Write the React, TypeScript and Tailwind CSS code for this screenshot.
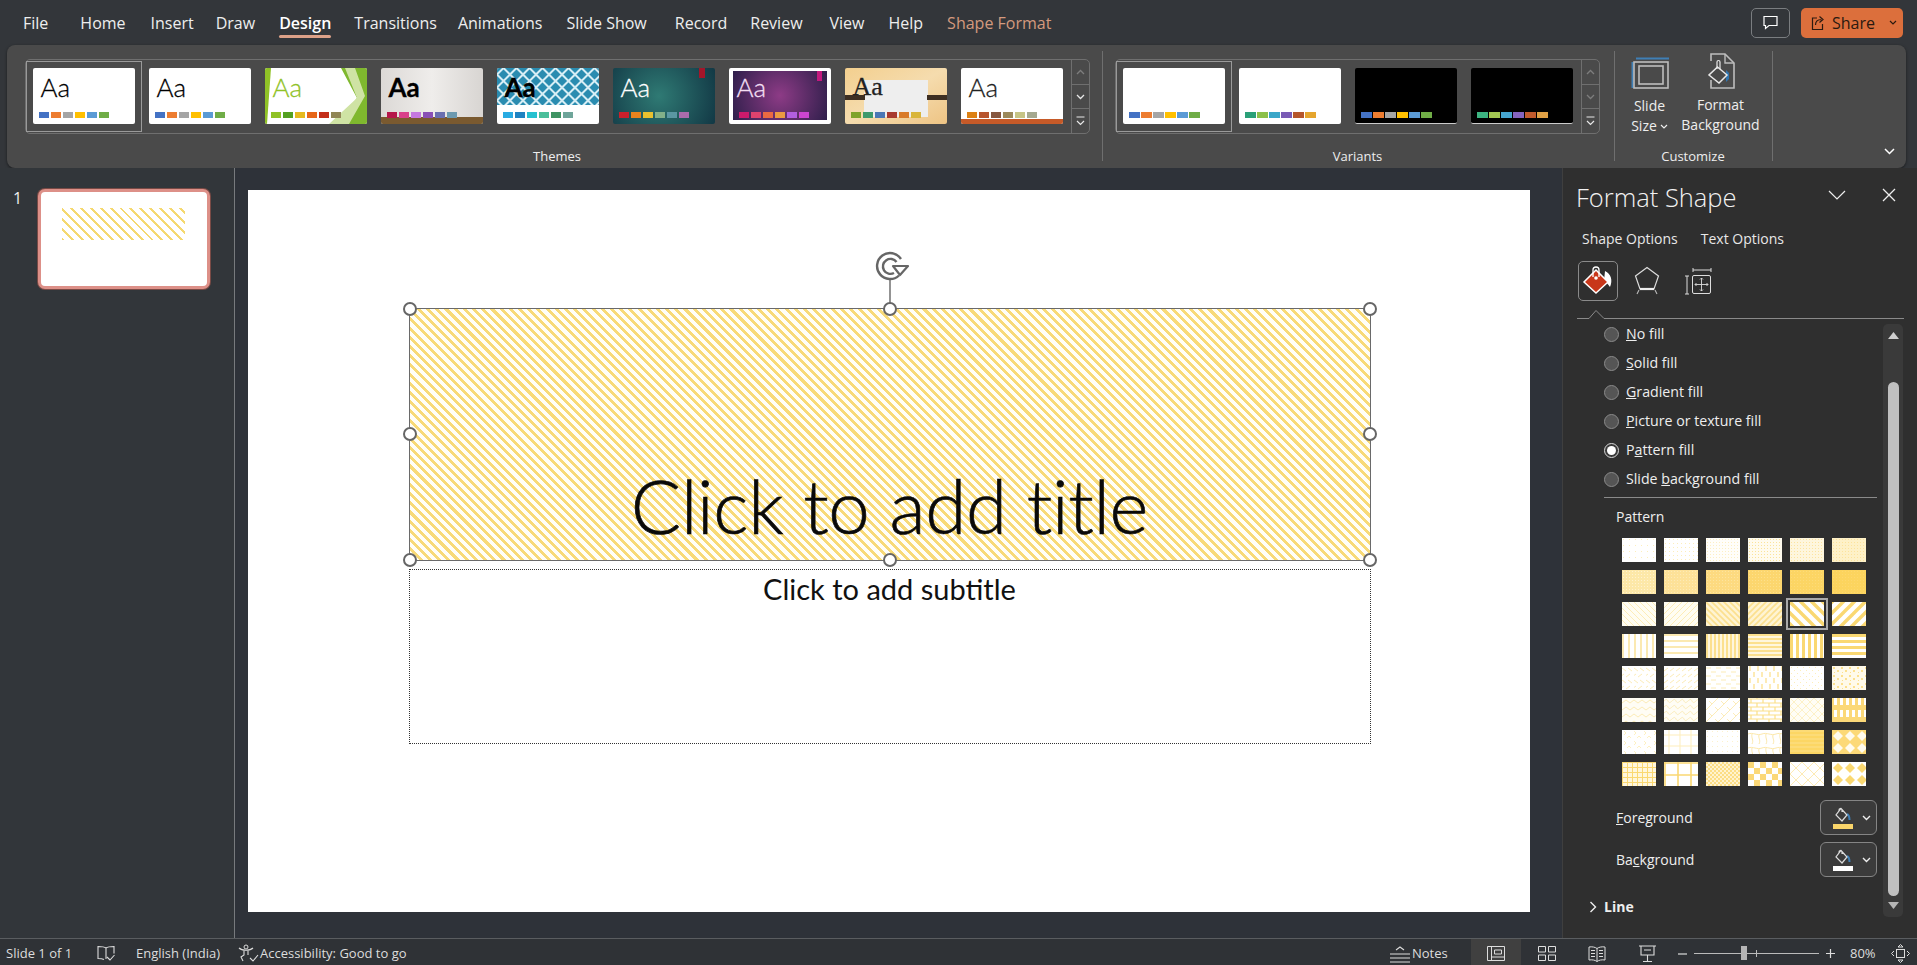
import React from "react";

const tabs: [string, string][] = [
  ["Home", ""],
  ["Insert", "ml-[2px]"],
  ["Draw", "-ml-[1px]"],
  ["Design", "relative ml-[1px] font-semibold text-white"],
  ["Transitions", ""],
  ["Animations", "-ml-[2px]"],
  ["Slide Show", "ml-[1px]"],
  ["Record", "ml-[5px]"],
  ["Review", ""],
  ["View", "ml-[4px]"],
  ["Help", "ml-[1px]"],
];

const office = ["bg-[#4472c4]","bg-[#ed7d31]","bg-[#a5a5a5]","bg-[#ffc000]","bg-[#5b9bd5]","bg-[#70ad47]"];

function Swatches({ colors }: { colors: string[] }) {
  return (
    <div className="relative flex gap-[1.5px] ml-[6px]">
      {colors.map((c, i) => (
        <div key={i} className={`w-[10.5px] h-[6px] ${c}`} />
      ))}
    </div>
  );
}

function Thumb({ cls, aa, colors, children, noAa }: { cls: string; aa?: string; colors: string[]; children?: React.ReactNode; noAa?: boolean }) {
  return (
    <div className={`relative w-[102px] h-[56px] rounded-[2px] overflow-hidden shrink-0 ${cls}`}>
      {children}
      <div className={`relative h-[44px] pl-[8px] pt-[4px] text-[26px] leading-[30px] font-['Lato',sans-serif] font-light [-webkit-text-stroke:0.3px_currentColor] ${aa ?? "text-black"}`}>{noAa ? "" : "Aa"}</div>
      <Swatches colors={colors} />
    </div>
  );
}

function ScrollCol({ dimDown }: { dimDown?: boolean }) {
  return (
    <div className="w-[18px] h-full ml-auto flex flex-col border-l border-[#6f6f6f]">
      <div className="flex-1 flex items-center justify-center border-b border-[#6f6f6f]">
        <svg width="9" height="6" viewBox="0 0 9 6"><path d="M1 5l3.500-3.500L8 5" fill="none" stroke="#7d7d7d" strokeWidth="1.3" /></svg>
      </div>
      <div className="flex-1 flex items-center justify-center border-b border-[#6f6f6f]">
        <svg width="9" height="6" viewBox="0 0 9 6"><path d="M1 1l3.500 3.500L8 1" fill="none" stroke={dimDown ? "#7d7d7d" : "#e8e8e8"} strokeWidth="1.3" /></svg>
      </div>
      <div className="flex-1 flex items-center justify-center">
        <svg width="9" height="11" viewBox="0 0 9 11"><path d="M0.500 1h8M1 5l3.500 3.500L8 5" fill="none" stroke="#e8e8e8" strokeWidth="1.2" /></svg>
      </div>
    </div>
  );
}

function Sep() {
  return <div className="w-px h-[110px] mt-[6px] bg-[#6f6f6f] shrink-0" />;
}

const dn = (n: number) => `M-1 -1L${n + 1} ${n + 1}M-1 ${n - 1}L1 ${n + 1}M${n - 1} -1L${n + 1} 1`;
const up = (n: number) => `M-1 ${n + 1}L${n + 1} -1M-1 1L1 -1M${n - 1} ${n + 1}L${n + 1} ${n - 1}`;
const Y = "#fad872";
const P1 = "#fcecb8";

type Pat = { w: number; h: number; d: string; sw?: number; f?: boolean; c?: string; bg?: string };
const patterns: Pat[] = [
  { w: 6, h: 6, d: "M1 1h1v1h-1z", f: true, c: "#fdeebb", bg: "#ffffff" },
  { w: 4, h: 4, d: "M1 1h1v1h-1z", f: true, c: "#fdeebb", bg: "#ffffff" },
  { w: 3, h: 3, d: "M1 1h1v1h-1z", f: true, c: "#fdefc4", bg: "#fffefa" },
  { w: 3, h: 3, d: "M1 1h1v1h-1z", f: true, c: "#fbe39a", bg: "#fffbee" },
  { w: 3, h: 3, d: "M1 1h1v1h-1z", f: true, c: "#fde49f", bg: "#fef6dd" },
  { w: 3, h: 3, d: "M1 1h1v1h-1z", f: true, c: "#fde39c", bg: "#fef1c8" },
  { w: 3, h: 3, d: "M1 1h1v1h-1z", f: true, c: "#fff3d0", bg: "#fde8a8" },
  { w: 3, h: 3, d: "M1 1h1v1h-1z", f: true, c: "#fdeab5", bg: "#fde198" },
  { w: 3, h: 3, d: "M1 1h1v1h-1z", f: true, c: "#fde49e", bg: "#fdda80" },
  { w: 3, h: 3, d: "M1 1h1v1h-1z", f: true, c: "#fde08a", bg: "#fcd66e" },
  { w: 3, h: 3, d: "M1 1h1v1h-1z", f: true, c: "#fddb78", bg: "#fcd564" },
  { w: 3, h: 3, d: "M1 1h1v1h-1z", f: true, c: "#fdd86e", bg: "#fcd45e" },
  { w: 6, h: 6, d: dn(6), sw: 0.9, c: "#fdeab0", bg: "#fffdf2" },
  { w: 6, h: 6, d: up(6), sw: 0.9, c: "#fdeab0", bg: "#fffdf2" },
  { w: 6, h: 6, d: dn(6), sw: 1.6, c: "#fce08e", bg: "#fff4d2" },
  { w: 6, h: 6, d: up(6), sw: 1.6, c: "#fce08e", bg: "#fff4d2" },
  { w: 11, h: 11, d: dn(11), sw: 3.4, c: Y },
  { w: 11, h: 11, d: up(11), sw: 3.4, c: Y },
  { w: 6, h: 6, d: "M1 0V6", sw: 1.6, c: "#fbe49e" },
  { w: 6, h: 6, d: "M0 1H6", sw: 1.6, c: "#fbe49e" },
  { w: 4, h: 4, d: "M1 0V4", sw: 2, c: "#fce08e", bg: "#fff6dd" },
  { w: 4, h: 4, d: "M0 1H4", sw: 2, c: "#fce08e", bg: "#fff6dd" },
  { w: 6, h: 6, d: "M1.500 0V6", sw: 3, c: Y },
  { w: 6, h: 6, d: "M0 1.500H6", sw: 3, c: Y },
  { w: 12, h: 12, d: "M0 2L4 5M6 2L10 5M2 8L-2 11M8 8L4 11", sw: 1, c: P1 },
  { w: 12, h: 12, d: "M0 5L4 2M6 5L10 2M0 11L4 8M6 11L10 8", sw: 1, c: P1 },
  { w: 10, h: 8, d: "M0 2H5M5 6H10", sw: 1.2, c: P1 },
  { w: 8, h: 12, d: "M2 0V5M6 6V11", sw: 2, c: "#fdebb5" },
  { w: 6, h: 6, d: "M1 1h1v1h-1zM4 4h1v1h-1z", f: true, c: "#fdeebb" },
  { w: 8, h: 8, d: "M1 1h2v2h-2zM5 4h2v2h-2zM2 6h1v1h-1z", f: true, c: "#fce08e", bg: "#fffaea" },
  { w: 8, h: 7, d: "M0 5L4 2L8 5", sw: 1, c: P1, bg: "#fffdf5" },
  { w: 8, h: 6, d: "M0 3C2 1 3 1 4 3S6 5 8 3", sw: 1, c: P1, bg: "#fffdf5" },
  { w: 12, h: 12, d: up(12) + "M3 3L6 6M9 9L12 12", sw: 1, c: P1 },
  { w: 12, h: 8, d: "M0 1H12M0 5H12M3 1V5M9 5V9M9 -3V1", sw: 1.2, c: "#fbe08a" },
  { w: 8, h: 8, d: dn(8) + up(8), sw: 0.8, c: "#fdeebb", bg: "#fffdf5" },
  { w: 12, h: 12, d: "M2 0h3v7h-3zM8 0h3v7h-3z", f: true, c: "#ffffff", bg: "#fbd878" },
  { w: 10, h: 10, d: "M2 1L4 3M4 3L2 5M7 6L9 8M7 6L5 8", sw: 0.9, c: "#fdeebb" },
  { w: 11, h: 11, d: "M0 5H11M5 0V11", sw: 1, c: "#fdeebb" },
  { w: 5, h: 5, d: "M1 1h1v1h-1z", f: true, c: "#fdf1cc" },
  { w: 14, h: 14, d: "M0 4C5 2 9 6 14 4M4 4C3 8 6 10 4 14M11 5C10 8 13 10 11 14", sw: 1, c: "#fce8ab" },
  { w: 4, h: 4, d: "M0 1H4", sw: 1, c: "#fde08a", bg: "#fcd664" },
  { w: 12, h: 12, d: "M6 1L11 6L6 11L1 6z", f: true, c: "#fffbee", bg: "#fcd978" },
  { w: 5, h: 5, d: "M0 0.500H5M0.500 0V5", sw: 1, c: Y, bg: "#fff7dd" },
  { w: 13, h: 12, d: "M0 1H13M1 0V12", sw: 1.6, c: Y },
  { w: 4, h: 4, d: "M0 0h2v2h-2zM2 2h2v2h-2z", f: true, c: "#fcdd84", bg: "#fff3cf" },
  { w: 12, h: 12, d: "M0 0h6v6h-6zM6 6h6v6h-6z", f: true, c: "#fbd878" },
  { w: 12, h: 12, d: dn(12) + up(12), sw: 0.9, c: "#fde9ad" },
  { w: 12, h: 12, d: "M6 1L11 6L6 11L1 6z", f: true, c: Y },
];

function PatternCell({ p, i, selected }: { p: Pat; i: number; selected?: boolean }) {
  const id = `pat${i}`;
  return (
    <svg width="34" height="24" className={selected ? "outline-2 outline-offset-2 outline-[#a9a9a9]" : ""}>
      <defs>
        <pattern id={id} width={p.w} height={p.h} patternUnits="userSpaceOnUse">
          <rect width={p.w} height={p.h} fill={p.bg ?? "#ffffff"} />
          {p.f ? <path d={p.d} fill={p.c ?? Y} /> : <path d={p.d} fill="none" stroke={p.c ?? Y} strokeWidth={p.sw ?? 1} />}
        </pattern>
      </defs>
      <rect width="34" height="24" fill={`url(#${id})`} />
    </svg>
  );
}

function Handle({ cls }: { cls: string }) {
  return <div className={`absolute w-[14px] h-[14px] rounded-full bg-white border-2 border-[#666666] -translate-x-1/2 -translate-y-1/2 ${cls}`} />;
}

function Radio({ on, children }: { on?: boolean; children: React.ReactNode }) {
  return (
    <div className="h-[29px] flex items-center">
      <div className={`w-[15px] h-[15px] rounded-full border flex items-center justify-center shrink-0 ${on ? "border-[#d8d8d8] bg-[#3a3a3a]" : "border-[#8a8a8a] bg-[#555555]"}`}>
        {on && <div className="w-[9px] h-[9px] rounded-full bg-white" />}
      </div>
      <span className="ml-[7px] text-[14.2px] text-[#eeeeee] leading-none">{children}</span>
    </div>
  );
}

function ColorBtn({ color }: { color: string }) {
  return (
    <div className="w-[57px] h-[35px] rounded-[6px] border border-[#858585] bg-[#3b3b3b] flex items-center pl-[12px] gap-[9px]">
      <div className="flex flex-col items-center gap-[1px]">
        <svg width="20" height="16" viewBox="0 0 20 16">
          <path d="M14 7c2 1 2.500 3 2.500 6" fill="none" stroke="#3f7fb5" strokeWidth="2" />
          <path d="M8 1.500L14 8l-5 6-6-6z M6 5V3a1.500 1.500 0 0 1 3 0v2" fill="none" stroke="#dddddd" strokeWidth="1.2" />
        </svg>
        <div className={`w-[20px] h-[5px] ${color}`} />
      </div>
      <svg width="9" height="6" viewBox="0 0 9 6"><path d="M1 1l3.500 3.500L8 1" fill="none" stroke="#eeeeee" strokeWidth="1.4" /></svg>
    </div>
  );
}

export default function App() {
  return (
    <div className="w-[1917px] h-[965px] flex flex-col bg-[#33363a] overflow-hidden text-[#eeeeee] font-['Open_Sans','Noto_Sans',sans-serif]">
      {/* Tab row */}
      <div className="h-[45px] shrink-0 flex items-center pl-[23px] pr-[14px] relative">
        <span className="text-[16px] mr-[32px]">File</span>
        <div className="flex gap-[23px] text-[16px]">
          {tabs.map(([t, cls]) => (
            <span key={t} className={cls}>
              {t}
              {t === "Design" && <span className="absolute left-0 right-0 -bottom-[3px] h-[3px] rounded-sm bg-[#dda188]" />}
            </span>
          ))}
          <span className="ml-[1px] text-[#d49a7e]">Shape Format</span>
        </div>
        <div className="ml-auto flex items-center gap-[11px]">
          <div className="w-[39px] h-[30px] rounded-[5px] border border-[#7a7d80] flex items-center justify-center">
            <svg width="15" height="15" viewBox="0 0 15 15"><path d="M1 1.500h13v9H6l-3.500 3v-3H1z" fill="none" stroke="#ffffff" strokeWidth="1.2" /></svg>
          </div>
          <div className="w-[102px] h-[30px] rounded-[5px] bg-[#dc6f3c] flex items-center pl-[10px] text-[#2b1a10]">
            <svg width="15" height="16" viewBox="0 0 15 16"><path d="M6 3H1.500v11.500h10V9M4.500 10c0-4 3-5.500 6-5.500M8.500 1.500l3.500 3-3.500 3" fill="none" stroke="#2b1a10" strokeWidth="1.2" /></svg>
            <span className="ml-[6px] text-[16px]">Share</span>
            <svg className="ml-[14px]" width="8" height="5" viewBox="0 0 8 5"><path d="M1 1l3 3 3-3" fill="none" stroke="#2b1a10" strokeWidth="1.2" /></svg>
          </div>
        </div>
      </div>

      {/* Ribbon */}
      <div className="h-[123px] shrink-0 ml-[7px] mr-[11px] rounded-lg bg-[#4a4a4a] flex pl-[17.5px] shadow-[0_1px_3px_rgba(0,0,0,0.5)]">
        <div className="w-[1065px] shrink-0 flex flex-col pt-[14px]">
          <div className="relative h-[75px] rounded-[5px] border border-[#6f6f6f] flex pl-[7px] pt-[8px] gap-[14px]">
            <div className="absolute left-0 top-[1px] w-[116px] h-[71px] border border-[#9a9a9a]" />
            <Thumb cls="bg-white" colors={office} />
            <Thumb cls="bg-white" colors={office} />
            <Thumb cls="bg-white" aa="text-[#90c226]" colors={["bg-[#90c226]","bg-[#54a021]","bg-[#e6b91e]","bg-[#e76618]","bg-[#c42f1a]","bg-[#918655]"]}>
              <svg className="absolute inset-0" width="102" height="56" viewBox="0 0 102 56">
                <polygon points="0,0 6,0 2,56 0,56" fill="#90c226" />
                <polygon points="76,0 102,0 102,56 72,56 92,30" fill="#7fb82e" />
                <polygon points="64,56 92,30 80,0 90,0 100,28 84,56" fill="#cfe3a4" />
              </svg>
            </Thumb>
            <Thumb cls="bg-gradient-to-r from-[#dcd9d6] via-[#efedeb] to-[#d8d5d2]" aa="text-black !font-bold" colors={["bg-[#b5174a]","bg-[#d9408a]","bg-[#c678e0]","bg-[#8a4fb5]","bg-[#6a6fb0]","bg-[#6c9ab0]"]}>
              <div className="absolute left-0 right-0 bottom-0 h-[7px] bg-[#7a5a30]" />
            </Thumb>
            <Thumb cls="bg-white" aa="text-black !font-bold" colors={["bg-[#29abe2]","bg-[#1f83c2]","bg-[#26c1d0]","bg-[#4bbf9b]","bg-[#3f9463]","bg-[#6fa59a]"]}>
              <svg className="absolute left-0 top-0" width="102" height="37">
                <defs>
                  <pattern id="mosaic" width="13" height="13" patternUnits="userSpaceOnUse">
                    <rect width="13" height="13" fill="#2a8cb0" />
                    <path d="M6.500 0L13 6.500L6.500 13L0 6.500z" fill="none" stroke="#d7eef5" strokeWidth="2" />
                  </pattern>
                </defs>
                <rect width="102" height="37" fill="url(#mosaic)" />
              </svg>
            </Thumb>
            <Thumb cls="bg-[radial-gradient(circle_at_45%_50%,#2f7a74,#123845)]" aa="text-white" colors={["bg-[#c9202c]","bg-[#e9831d]","bg-[#e9c12f]","bg-[#82b089]","bg-[#5a97a3]","bg-[#a96cac]"]}>
              <div className="absolute right-[10px] top-0 w-[6px] h-[10px] bg-[#a3162a]" />
            </Thumb>
            <Thumb cls="bg-[radial-gradient(circle_at_50%_50%,#8d3b86,#2f1f4b)] border-[4px] border-white border-t-[3px]" aa="text-[#f3dff3] !pl-[4px] !pt-[1px] !h-[41px]" colors={["bg-[#cc1a6c]","bg-[#e0426e]","bg-[#ea6a42]","bg-[#eb9a41]","bg-[#b25fe0]","bg-[#cd45d0]"]}>
              <div className="absolute right-[5px] top-0 w-[5px] h-[10px] bg-[#c2187e]" />
            </Thumb>
            <Thumb cls="bg-gradient-to-br from-[#f3cf8e] via-[#f5dcae] to-[#eec484]" aa="text-[#222222] !font-['Liberation_Serif',serif]" colors={["bg-[#7fa32a]","bg-[#3d9a6c]","bg-[#4a77b5]","bg-[#a83a2f]","bg-[#d97b29]","bg-[#d9b53b]"]}>
              <div className="absolute left-[19px] top-[12px] w-[64px] h-[37px] bg-[#eeeeee]" />
              <div className="absolute left-0 top-[27px] w-[20px] h-[5px] bg-[#3e2f22]" />
              <div className="absolute right-0 top-[27px] w-[20px] h-[5px] bg-[#3e2f22]" />
            </Thumb>
            <Thumb cls="bg-white" aa="text-[#222222]" colors={["bg-[#dc8115]","bg-[#b8552e]","bg-[#865740]","bg-[#9c8a5c]","bg-[#c6c486]","bg-[#a5a990]"]}>
              <div className="absolute left-0 right-0 bottom-0 h-[5px] bg-[#c65a28]" />
            </Thumb>
            <div className="absolute right-0 top-0 bottom-0"><ScrollCol /></div>
          </div>
          <div className="mt-[12px] text-center text-[13px] leading-[20px] text-[#eeeeee]">Themes</div>
        </div>

        <div className="ml-[12.5px]"><Sep /></div>

        <div className="ml-[12px] w-[485px] shrink-0 flex flex-col pt-[14px]">
          <div className="relative h-[75px] rounded-[5px] border border-[#6f6f6f] flex pl-[7px] pt-[8px] gap-[14px]">
            <div className="absolute left-0 top-[1px] w-[116px] h-[71px] border border-[#9a9a9a]" />
            <Thumb noAa cls="bg-white" colors={office} />
            <Thumb noAa cls="bg-white" colors={["bg-[#2aa078]","bg-[#8cc04a]","bg-[#3ba7c9]","bg-[#7a5bb5]","bg-[#b5562c]","bg-[#e5a52e]"]} />
            <Thumb noAa cls="bg-black border-b border-[#cccccc]" colors={office} />
            <Thumb noAa cls="bg-black border-b border-[#cccccc]" colors={["bg-[#3cb380]","bg-[#a2c652]","bg-[#46a5cf]","bg-[#8464bf]","bg-[#c05a2c]","bg-[#dfa045]"]} />
            <div className="absolute right-0 top-0 bottom-0"><ScrollCol dimDown /></div>
          </div>
          <div className="mt-[12px] text-center text-[13px] leading-[20px] text-[#eeeeee]">Variants</div>
        </div>

        <div className="ml-[13.5px]"><Sep /></div>

        <div className="w-[157px] shrink-0 flex flex-col pt-[10px]">
          <div className="flex h-[92px] text-[14px] leading-[20px]">
            <div className="w-[70px] flex flex-col items-center pt-[2px]">
              <svg width="38" height="32" viewBox="0 0 38 32">
                <path d="M5 1.500h33M1.500 5v26" stroke="#3f7fb5" strokeWidth="2" fill="none" />
                <rect x="3" y="5" width="34" height="26" fill="none" stroke="#bdbdbd" strokeWidth="1.6" />
                <rect x="8" y="9" width="24" height="18" fill="none" stroke="#bdbdbd" strokeWidth="1.6" />
              </svg>
              <span className="mt-[7px] whitespace-nowrap">Slide</span>
              <span className="whitespace-nowrap flex items-center gap-[3px]">Size
                <svg width="8" height="5" viewBox="0 0 8 5"><path d="M1 1l3 3 3-3" fill="none" stroke="#eeeeee" strokeWidth="1.2" /></svg>
              </span>
            </div>
            <div className="w-[72px] flex flex-col items-center -mt-[2px]">
              <svg width="28" height="36" viewBox="0 0 28 36">
                <path d="M4 8V1h14l9 9v25H4v-8" fill="none" stroke="#bdbdbd" strokeWidth="1.6" />
                <path d="M18 1v9h9" fill="none" stroke="#bdbdbd" strokeWidth="1.4" />
                <path d="M19 17l3 3v6l-3 3z" fill="#2f74b0" />
                <path d="M10 16V9a1.500 1.500 0 0 1 3 0v7" fill="none" stroke="#e8e8e8" strokeWidth="1.2" />
                <path d="M10.500 14L20 22l-8 8-10-8z" fill="none" stroke="#e8e8e8" strokeWidth="1.5" />
              </svg>
              <span className="mt-[6px] whitespace-nowrap">Format</span>
              <span className="whitespace-nowrap">Background</span>
            </div>
          </div>
          <div className="-mt-[1px] text-center text-[13px] leading-[20px]">Customize</div>
        </div>

        <Sep />

        <div className="flex-1 flex items-end justify-end pb-[13px] pr-[11px]">
          <svg width="11" height="7" viewBox="0 0 11 7"><path d="M1 1l4.500 4.500L10 1" fill="none" stroke="#ffffff" strokeWidth="1.5" /></svg>
        </div>
      </div>

      {/* Main */}
      <div className="flex-1 min-h-0 flex">
        <div className="w-[235px] shrink-0 border-r border-[#777a7d] flex pt-[21px] pl-[13px] bg-[#32363a]">
          <span className="text-[16px] leading-[16px] w-[25px] mt-[1px]">1</span>
          <div className="w-[172px] h-[100px] rounded-[7px] border-[3.5px] border-[#dd9088] bg-white pl-[20.5px] pt-[15.5px] shadow-[0_0_0_1px_#7a4a45]">
            <div className="w-[123px] h-[32px] bg-[repeating-linear-gradient(45deg,#f5d970_0,#f5d970_2px,#ffffff_2px,#ffffff_7px)]" />
          </div>
        </div>

        <div className="flex-1 min-w-0 pl-[13px] pt-[21.5px] bg-[#2e3239]">
          <div className="relative w-[1282px] h-[722px] bg-white pt-[118px] pl-[160.5px] text-black font-['Lato',sans-serif]">
            {/* rotate handle */}
            <svg className="absolute left-[626px] top-[60px]" width="36" height="60" viewBox="0 0 36 60">
              <path d="M16 29V60" stroke="#666666" strokeWidth="1.4" />
              <path d="M25 25.500A13 13 0 1 1 27 9" fill="none" stroke="#666666" strokeWidth="2.4" />
              <path d="M20 23A7.500 7.500 0 1 1 22.500 12" fill="none" stroke="#666666" strokeWidth="2.4" />
              <path d="M19 16l15 0-8 9z" fill="#ffffff" stroke="#666666" strokeWidth="2.2" strokeLinejoin="round" />
            </svg>
            <div className="relative w-[962px] h-[253px] border border-[#6a6a6a] bg-[repeating-linear-gradient(45deg,#f8da78_0,#f8da78_2.9px,#fffef8_2.9px,#fffef8_6.5px)] flex justify-center items-end pb-[8px]">
              <span className="text-[74.5px] leading-[94px] font-light tracking-[-0.3px] text-[#0a0a0a] [-webkit-text-stroke:0.7px_#0a0a0a]">Click to add title</span>
              <Handle cls="left-0 top-0" />
              <Handle cls="left-1/2 top-0" />
              <Handle cls="left-full top-0" />
              <Handle cls="left-0 top-1/2" />
              <Handle cls="left-full top-1/2" />
              <Handle cls="left-0 top-full" />
              <Handle cls="left-1/2 top-full" />
              <Handle cls="left-full top-full" />
            </div>
            <div className="w-[962px] h-[175px] mt-[8px] pt-[1px] border border-dotted border-[#333333] text-center text-[29px] leading-[36px] text-[#111111]">
              Click to add subtitle
            </div>
          </div>
        </div>

        {/* Format pane */}
        <div className="w-[355px] shrink-0 bg-[#2f2f2f] border-l border-[#3f3f3f] flex flex-col">
          <div className="h-[34px] mt-[12px] flex items-center pl-[13px]">
            <span className="text-[25.5px] font-light text-[#f2f2f2] whitespace-nowrap">Format Shape</span>
            <svg className="ml-auto -translate-y-[2px]" width="18" height="10" viewBox="0 0 18 10"><path d="M1 1l8 8 8-8" fill="none" stroke="#eeeeee" strokeWidth="1.2" /></svg>
            <svg className="ml-[36px] mr-[21px] -translate-y-[2px]" width="14" height="14" viewBox="0 0 14 14"><path d="M1 1l12 12M13 1L1 13" fill="none" stroke="#eeeeee" strokeWidth="1.3" /></svg>
          </div>
          <div className="mt-[15px] flex pl-[19px] gap-[23px] text-[14px] leading-[20px] text-[#e8e8e8]">
            <span>Shape Options</span>
            <span>Text Options</span>
          </div>
          <div className="mt-[12px] flex items-center pl-[15px]">
            <div className="w-[40px] h-[40px] rounded-[5px] border border-[#8a8a8a] flex items-center justify-center">
              <svg width="38" height="38" viewBox="0 0 38 38">
                <path d="M26 9c6 3 8 9 5 16-2-3-4-5-6-6z" fill="#ffffff" />
                <path d="M17 8L29 20 17 31 5 20z" fill="#c8371a" stroke="#ffffff" strokeWidth="1.5" />
                <path d="M14 15V8a3 3 0 0 1 6 0v7" fill="none" stroke="#ffffff" strokeWidth="1.3" />
                <circle cx="17" cy="16" r="1.8" fill="#ffffff" />
              </svg>
            </div>
            <svg className="ml-[16px]" width="26" height="30" viewBox="0 0 26 30">
              <path d="M13 1.500L24.500 10 20 23H6L1.500 10z" fill="none" stroke="#dddddd" strokeWidth="1.2" />
              <path d="M6 23h14" stroke="#eeeeee" strokeWidth="2.2" />
              <path d="M5 24l-2 4M21 24l2 4" stroke="#bbbbbb" strokeWidth="1.1" />
            </svg>
            <svg className="ml-[24px]" width="28" height="28" viewBox="0 0 28 28">
              <path d="M9 1v4M27 1v4M9 3h18M1 9h4M1 27h4M3 9v18" fill="none" stroke="#dddddd" strokeWidth="1" />
              <rect x="8.500" y="8.500" width="18" height="18" rx="1.500" fill="none" stroke="#dddddd" strokeWidth="1" />
              <path d="M17.500 11v13M11 17.500h13M16 12.500l1.500-1.500 1.500 1.500M16 22.500l1.500 1.500 1.500-1.500M12.500 16L11 17.500l1.500 1.500M22.500 16l1.500 1.500-1.500 1.500" fill="none" stroke="#dddddd" strokeWidth="0.9" />
            </svg>
          </div>
          <svg className="mt-[8px] ml-[14px] shrink-0" width="327" height="10" viewBox="0 0 327 10">
            <path d="M0 9.500H12L19 1.500 27 9.500H327" fill="none" stroke="#8a8a8a" strokeWidth="1" />
          </svg>

          <div className="flex flex-1 min-h-0">
            <div className="w-[320px] shrink-0 pl-[41px]">
              <div className="pt-[1px]">
                <Radio><u>N</u>o fill</Radio>
                <Radio><u>S</u>olid fill</Radio>
                <Radio><u>G</u>radient fill</Radio>
                <Radio><u>P</u>icture or texture fill</Radio>
                <Radio on>P<u>a</u>ttern fill</Radio>
                <Radio>Slide <u>b</u>ackground fill</Radio>
              </div>
              <div className="h-px w-[273px] mt-[3px] bg-[#8a8a8a]" />
              <div className="ml-[12px] mt-[9px] text-[14px] leading-[20px] text-[#eeeeee]">Pattern</div>
              <div className="ml-[18px] mt-[11px] grid grid-cols-[repeat(6,34px)] gap-2">
                {patterns.map((p, i) => (
                  <PatternCell key={i} p={p} i={i} selected={i === 16} />
                ))}
              </div>
              <div className="ml-[12px] mt-[14px] w-[261px] h-[35px] flex items-center justify-between text-[14px]">
                <span><u>F</u>oreground</span>
                <ColorBtn color="bg-[#fad56a]" />
              </div>
              <div className="ml-[12px] mt-[7px] w-[261px] h-[35px] flex items-center justify-between text-[14px]">
                <span>Ba<u>c</u>kground</span>
                <ColorBtn color="bg-white" />
              </div>
              <div className="-ml-[15px] mt-[20px] flex items-center text-[14px] font-bold leading-[20px]">
                <svg width="8" height="12" viewBox="0 0 8 12"><path d="M1.500 1l5 5-5 5" fill="none" stroke="#eeeeee" strokeWidth="1.4" /></svg>
                <span className="ml-[7px]">Line</span>
              </div>
            </div>
            <div className="w-[20px] h-[593px] mt-[5px] rounded-[5px] bg-[#3a3a3a] flex flex-col items-center pt-[8px]">
              <svg className="shrink-0" width="11" height="7" viewBox="0 0 11 7"><path d="M5.500 0L11 7H0z" fill="#cfcfcf" /></svg>
              <div className="w-[11px] h-[514px] shrink-0 mt-[43px] rounded-full bg-[#c0c0c0]" />
              <svg className="mt-[6px] shrink-0" width="11" height="7" viewBox="0 0 11 7"><path d="M5.500 7L11 0H0z" fill="#b5b5b5" /></svg>
            </div>
          </div>
        </div>
      </div>

      {/* Status bar */}
      <div className="h-[27px] shrink-0 flex items-center border-t border-[#5a5d60] bg-[#2f3236] text-[13px] text-[#dddddd] pl-[6px] pr-[7px]">
        <span className="w-[91px] whitespace-nowrap pt-[3px]">Slide 1 of 1</span>
        <svg className="mt-[3px]" width="18" height="17" viewBox="0 0 18 17"><path d="M9 14V3C7 1.500 4 1.500 1 1.500v12c2.500 0 4 0 6 1M9 3c2-1.500 5-1.500 8-1.500v7M10 12l3 3 4.500-5" fill="none" stroke="#dddddd" strokeWidth="1.1" /></svg>
        <span className="ml-[21px] w-[102px] whitespace-nowrap pt-[3px]">English (India)</span>
        <svg className="mt-[3px]" width="21" height="19" viewBox="0 0 21 19"><circle cx="8" cy="3" r="2" fill="none" stroke="#dddddd" strokeWidth="1" /><path d="M1 4c3 3 11 3 14 0M6 7v4l-3 2 2 4M10 7v4M12 14l3 3 5-6" fill="none" stroke="#dddddd" strokeWidth="1.1" /></svg>
        <span className="ml-[1px] whitespace-nowrap pt-[3px]">Accessibility: Good to go</span>

        <svg className="ml-auto mt-[3px]" width="20" height="18" viewBox="0 0 20 18"><path d="M6 5l4-3 4 3M0 9h20M0 13h20M0 17h20" fill="none" stroke="#dddddd" strokeWidth="1.1" /></svg>
        <span className="ml-[2px] w-[59px] pt-[3px]">Notes</span>
        <div className="w-[50px] h-[26px] bg-[#404040] flex items-center justify-center">
          <svg className="mt-[3px]" width="18" height="15" viewBox="0 0 18 15"><path d="M0.500 0.500h17v14H0.500zM4.500 0.500v14M4.500 11h13M7.500 4h7v4h-7z" fill="none" stroke="#dddddd" strokeWidth="1" /></svg>
        </div>
        <svg className="ml-[17px] mt-[3px]" width="18" height="15" viewBox="0 0 18 15"><path d="M0.500 0.500h7v5.500h-7zM10.500 0.500h7v5.500h-7zM0.500 9h7v5.500h-7zM10.500 9h7v5.500h-7z" fill="none" stroke="#dddddd" strokeWidth="1" /></svg>
        <svg className="ml-[32px] mt-[3px]" width="18" height="16" viewBox="0 0 18 16"><path d="M9 2.500C7 1 4 0.500 1 1v13c3-.5 6 0 8 1.500 2-1.500 5-2 8-1.500V1c-3-.5-6 0-8 1.500zM9 2.500v13M3 4.500h4M3 7.500h4M3 10.500h4M11 4.500h4M11 7.500h4M11 10.500h4" fill="none" stroke="#dddddd" strokeWidth="1" /></svg>
        <svg className="ml-[33px] mt-[3px]" width="17" height="17" viewBox="0 0 17 17"><path d="M0 1h17M2 1v9h13V1M8.500 10v6M4 16.500h9M5 5h7" fill="none" stroke="#dddddd" strokeWidth="1.1" /></svg>
        <svg className="ml-[22px] mt-[3px]" width="9" height="2" viewBox="0 0 9 2"><path d="M0 1h9" stroke="#dddddd" strokeWidth="1.2" /></svg>
        <div className="relative ml-[7px] mt-[3px] w-[125px] h-px bg-[#bbbbbb]">
          <div className="absolute left-[47px] -top-[7px] w-[6px] h-[14px] bg-[#b5b5b5]" />
          <div className="absolute left-[62px] -top-[3px] w-px h-[7px] bg-[#bbbbbb]" />
        </div>
        <svg className="ml-[7px] mt-[3px]" width="9" height="9" viewBox="0 0 9 9"><path d="M0 4.500h9M4.500 0v9" stroke="#dddddd" strokeWidth="1.2" /></svg>
        <span className="ml-[15px] w-[41px] whitespace-nowrap pt-[3px]">80%</span>
        <svg className="mt-[3px]" width="19" height="19" viewBox="0 0 19 19"><path d="M9.500 0.500l2.500 2.500H7zM9.500 18.500L7 16h5zM3 7L0.500 9.500 3 12M16 7l2.500 2.500L16 12" fill="none" stroke="#dddddd" strokeWidth="1" /><rect x="5.500" y="5.500" width="8" height="8" fill="none" stroke="#dddddd" strokeWidth="1" /></svg>
      </div>
    </div>
  );
}
